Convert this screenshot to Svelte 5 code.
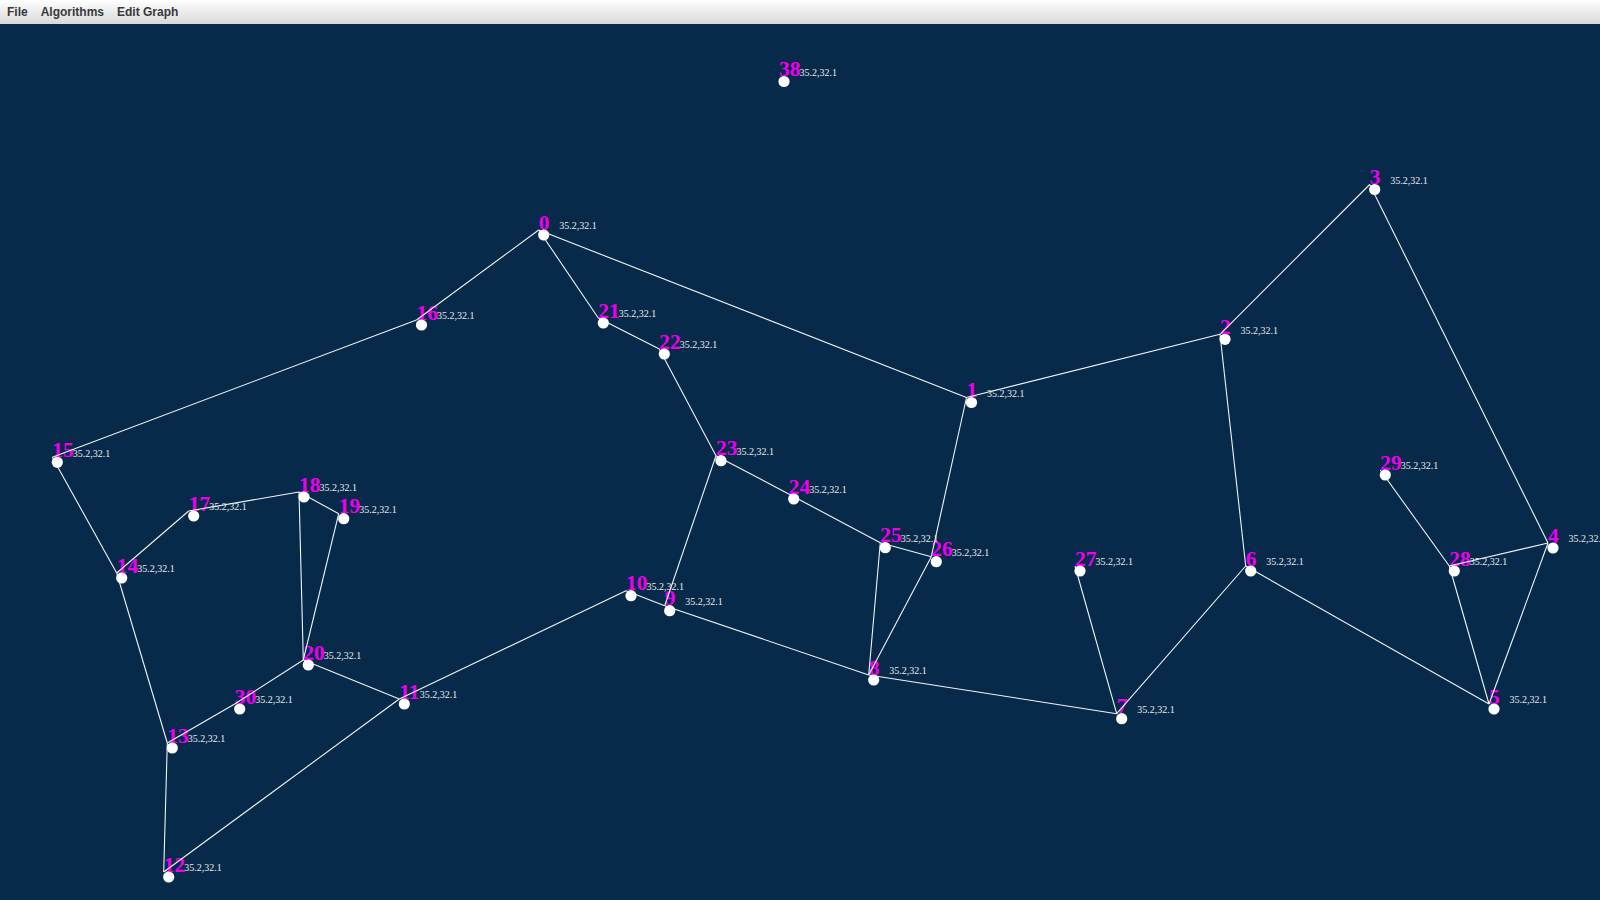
<script>
    const nodes = [
        [0, 543.7, 235], [1, 971.5, 402.5], [2, 1225, 339.3], [3, 1374.7, 189.5], [4, 1553, 548],
        [5, 1494, 709], [6, 1250.7, 571], [7, 1121.7, 718.7], [8, 873.7, 680], [9, 669.7, 610.7],
        [10, 631, 595.7], [11, 404.3, 704], [12, 168.7, 877], [13, 172.3, 748], [14, 121.7, 578],
        [15, 57.3, 462.3], [16, 421.5, 325], [17, 193.7, 516], [18, 304, 497], [19, 343.7, 518.7],
        [20, 308.3, 665], [21, 603.3, 323], [22, 664.3, 354], [23, 721, 460.7], [24, 793.7, 499],
        [25, 885.3, 547.7], [26, 936.3, 561.7], [27, 1080, 571], [28, 1454.3, 571], [29, 1385.3, 475],
        [30, 239.7, 709], [38, 784, 81.5]
    ].map(([id, x, y]) => ({ id, x, y }));

    const byId = Object.fromEntries(nodes.map((n) => [n.id, n]));

    const edges = [
        [0, 16], [16, 15], [15, 14], [14, 17], [17, 18], [18, 19], [18, 20], [19, 20],
        [14, 13], [13, 30], [30, 20], [20, 11], [13, 12], [12, 11], [11, 10], [10, 9],
        [9, 8], [8, 7], [7, 6], [7, 27], [6, 5], [6, 2], [2, 1], [2, 3], [3, 4], [4, 5],
        [4, 28], [28, 5], [28, 29], [0, 1], [0, 21], [21, 22], [22, 23], [23, 24],
        [24, 25], [25, 26], [25, 8], [1, 26], [26, 8], [23, 9]
    ];

    // edges end up and left of the dot, like the labels
    const off = 5;
</script>

<div class="app">
    <nav class="menubar">
        <span>File</span>
        <span>Algorithms</span>
        <span>Edit Graph</span>
    </nav>

    <svg class="canvas" viewBox="0 24 1600 876" width="1600" height="876">
        {#each nodes as n}
            <text class="num" x={n.x - off} y={n.y - off - 0.5}>{n.id}</text>
            <text class="pos" x={n.x + 15.5} y={n.y - off - 0.7}>35.2,32.1</text>
        {/each}
        {#each edges as [a, b]}
            <line
                x1={byId[a].x - off}
                y1={byId[a].y - off}
                x2={byId[b].x - off}
                y2={byId[b].y - off}
            />
        {/each}
        {#each nodes as n}
            <circle cx={n.x} cy={n.y} r="5.6" />
        {/each}
    </svg>
</div>

<style>
    :global(body) {
        margin: 0;
        background: #072a4a;
    }

    .app {
        width: 1600px;
        height: 900px;
        overflow: hidden;
        display: flex;
        flex-direction: column;
    }

    .menubar {
        height: 24px;
        box-sizing: border-box;
        display: flex;
        align-items: center;
        gap: 13px;
        padding: 0 7px;
        background: linear-gradient(#ffffff, #d8d8d8);
        font-family: "Liberation Sans", Arial, sans-serif;
        font-size: 12px;
        font-weight: bold;
        color: #383838;
    }

    .canvas {
        display: block;
        background: #072a4a;
    }

    line {
        stroke: #f0f4f6;
        stroke-width: 1.1;
    }

    circle {
        fill: #fff;
    }

    text {
        font-family: "Liberation Serif", "Times New Roman", serif;
    }

    .num {
        font-size: 21.5px;
        font-weight: bold;
        fill: #ee00ee;
    }

    .pos {
        font-size: 10px;
        fill: #e6ebef;
    }
</style>
